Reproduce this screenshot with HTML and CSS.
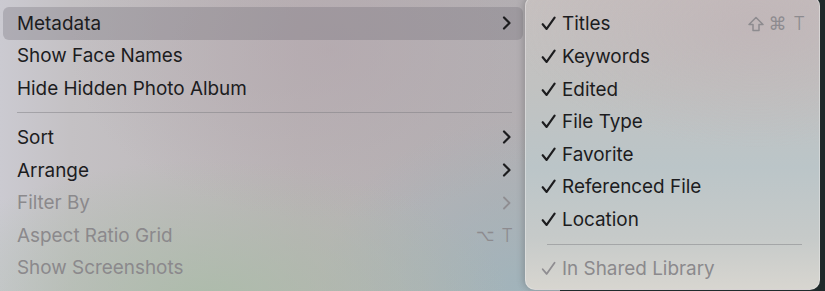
FILE: index.html
```html
<!DOCTYPE html>
<html>
<head>
<meta charset="utf-8">
<link rel="stylesheet" href="styles.css">
</head>
<body>
<div class="screen">
  <div class="menu">
    <div class="item active"><span class="label">Metadata</span><svg class="chev" viewBox="0 0 10 14"><polyline points="2,1.5 7.5,7 2,12.5"/></svg></div>
    <div class="item"><span class="label">Show Face Names</span></div>
    <div class="item"><span class="label">Hide Hidden Photo Album</span></div>
    <div class="sep"></div>
    <div class="item"><span class="label">Sort</span><svg class="chev" viewBox="0 0 10 14"><polyline points="2,1.5 7.5,7 2,12.5"/></svg></div>
    <div class="item"><span class="label">Arrange</span><svg class="chev" viewBox="0 0 10 14"><polyline points="2,1.5 7.5,7 2,12.5"/></svg></div>
    <div class="item disabled"><span class="label">Filter By</span><svg class="chev" viewBox="0 0 10 14"><polyline points="2,1.5 7.5,7 2,12.5"/></svg></div>
    <div class="item disabled"><span class="label">Aspect Ratio Grid</span><span class="key"><span class="opt">&#x2325;</span><span class="kt">T</span></span></div>
    <div class="item disabled"><span class="label">Show Screenshots</span></div>
  </div>
  <div class="submenu">
    <div class="item"><svg class="check" viewBox="0 0 16 16"><polyline points="1.8,8.8 6,13.8 14.5,1.8"/></svg><span class="label">Titles</span><span class="key"><svg class="shift" viewBox="0 0 16 16"><path d="M8 1.5 L15 8.5 L11 8.5 L11 14.5 L5 14.5 L5 8.5 L1 8.5 Z"/></svg><span class="cmd">&#x2318;</span><span class="kt">T</span></span></div>
    <div class="item"><svg class="check" viewBox="0 0 16 16"><polyline points="1.8,8.8 6,13.8 14.5,1.8"/></svg><span class="label">Keywords</span></div>
    <div class="item"><svg class="check" viewBox="0 0 16 16"><polyline points="1.8,8.8 6,13.8 14.5,1.8"/></svg><span class="label">Edited</span></div>
    <div class="item"><svg class="check" viewBox="0 0 16 16"><polyline points="1.8,8.8 6,13.8 14.5,1.8"/></svg><span class="label">File Type</span></div>
    <div class="item"><svg class="check" viewBox="0 0 16 16"><polyline points="1.8,8.8 6,13.8 14.5,1.8"/></svg><span class="label">Favorite</span></div>
    <div class="item"><svg class="check" viewBox="0 0 16 16"><polyline points="1.8,8.8 6,13.8 14.5,1.8"/></svg><span class="label">Referenced File</span></div>
    <div class="item"><svg class="check" viewBox="0 0 16 16"><polyline points="1.8,8.8 6,13.8 14.5,1.8"/></svg><span class="label">Location</span></div>
    <div class="sep"></div>
    <div class="item disabled"><svg class="check" viewBox="0 0 16 16"><polyline points="1.8,8.8 6,13.8 14.5,1.8"/></svg><span class="label">In Shared Library</span></div>
  </div>
</div>
</body>
</html>
```
FILE: styles.css
```css
* { box-sizing: border-box; }
html, body { margin: 0; padding: 0; }
body {
  width: 825px;
  height: 291px;
  overflow: hidden;
  background: #1f2a2b;
  font-family: Inter, "Noto Sans", "DejaVu Sans", sans-serif;
  font-size: 18.9px;
  color: #1c1c1e;
}
.screen {
  position: relative;
  width: 825px;
  height: 291px;
}
.menu {
  width: 560px;
  height: 291px;
  padding: 7px 0 0 3px;
  background:
    radial-gradient(ellipse 260px 170px at 330px 50px, rgba(178,165,172,0.6), rgba(178,165,172,0) 100%),
    radial-gradient(ellipse 300px 140px at 210px 300px, rgba(170,188,168,0.85), rgba(170,188,168,0) 100%),
    radial-gradient(ellipse 200px 170px at 520px 290px, rgba(158,180,188,0.85), rgba(158,180,188,0) 100%),
    linear-gradient(to right, #cbcad1 0px, #c4c1c4 70px, #bab4b6 300px, #b3b0b3 520px);
}
.item {
  display: flex;
  align-items: center;
  height: 32.6px;
  padding: 0 10px 0 14px;
  border-radius: 6px;
  width: 520px;
  white-space: nowrap;
}
.item .label { flex: 1; }
.item.active { background: rgba(110,105,115,0.3); }
.item.disabled { color: #8b898c; }
.chev {
  width: 10px;
  height: 14px;
  fill: none;
  stroke: #1c1c1e;
  stroke-width: 2.2;
  stroke-linecap: round;
  stroke-linejoin: round;
  margin-right: 1px;
}
.disabled .chev { stroke: #8f8d91; stroke-width: 1.8; }
.key {
  color: #8d8b8f;
  display: flex;
  align-items: center;
  font-size: 18px;
}
.key .kt { font-family: Inter, sans-serif; font-weight: 300; margin-left: 7px; }
.key .opt { font-family: "DejaVu Sans", sans-serif; font-size: 16px; }
.key .cmd { font-family: "DejaVu Sans", sans-serif; font-size: 18px; margin-left: 5px; }
.shift {
  width: 16px;
  height: 16px;
  fill: none;
  stroke: #8d8b8f;
  stroke-width: 1.5;
  stroke-linejoin: round;
}
.menu .sep {
  height: 16.4px;
  margin: 0 14px 0 14px;
  width: 495px;
  display: flex;
  align-items: center;
}
.menu .sep::after,
.submenu .sep::after {
  content: "";
  display: block;
  width: 100%;
  height: 1px;
  background: rgba(120,120,125,0.45);
}
.submenu {
  position: absolute;
  left: 525px;
  top: -4px;
  width: 295px;
  height: 294px;
  padding-top: 10.7px;
  border-radius: 10px;
  border: 1px solid rgba(235,235,235,0.5);
  box-shadow: -2px 0 6px rgba(60,60,60,0.25);
  background:
    radial-gradient(ellipse 240px 120px at 230px 30px, rgba(190,176,180,0.6), rgba(190,176,180,0) 100%),
    linear-gradient(to bottom, #c6c0bf 0px, #c1c2c1 90px, #bbc5c8 170px, #c6cac9 240px, #d8d6d0 294px);
}
.submenu .item {
  width: 100%;
  padding: 0 14px 0 15px;
  border-radius: 0;
}
.check {
  width: 15px;
  height: 15px;
  margin-right: 6px;
  fill: none;
  stroke: #1c1c1e;
  stroke-width: 2.3;
  stroke-linecap: round;
  stroke-linejoin: round;
}
.disabled .check { stroke: #8f8d91; stroke-width: 1.9; }
.submenu .sep {
  height: 16.4px;
  margin: 0 17px 0 21px;
  display: flex;
  align-items: center;
}
```
